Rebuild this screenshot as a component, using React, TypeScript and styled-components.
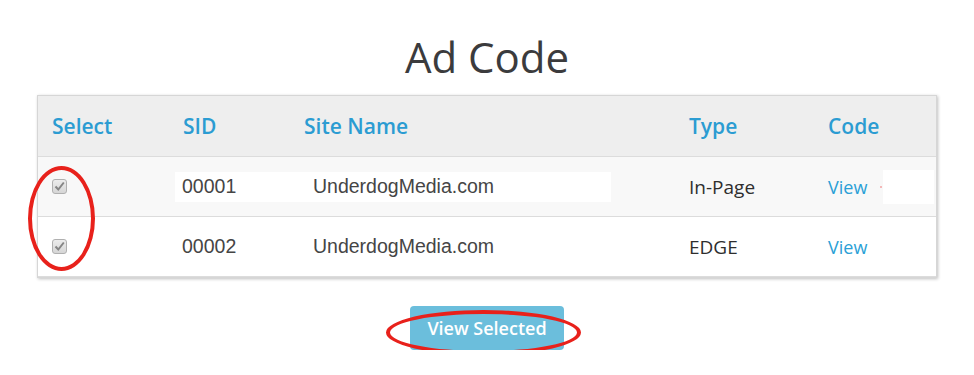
import styled, { createGlobalStyle } from "styled-components";

const GlobalStyle = createGlobalStyle`
  body {
    margin: 0;
    background: #fff;
    font-family: "Open Sans", "Liberation Sans", sans-serif;
  }
`;

const Page = styled.div`
  width: 974px;
  padding-top: 32px;
  display: flex;
  flex-direction: column;
  align-items: center;
`;

const Title = styled.h1`
  margin: 0 0 13px;
  height: 50px;
  line-height: 50px;
  font-size: 42px;
  font-weight: 400;
  color: #3b3b3d;
`;

const Card = styled.div`
  position: relative;
  width: 898px;
  border: 1px solid #d6d6d6;
  box-shadow: 1px 1px 3px rgba(0, 0, 0, 0.25);
  background: #fff;
`;

const Row = styled.div<{ $bg: string; $height: number }>`
  display: grid;
  grid-template-columns: 131px 121px 385px 139px 1fr;
  align-items: center;
  height: ${p => p.$height}px;
  padding-left: 14px;
  background: ${p => p.$bg};
  border-bottom: 1px solid #dcdcdc;
  &:last-child {
    border-bottom: none;
  }
`;

const Head = styled.div`
  font-size: 21px;
  font-weight: 600;
  color: #2b9cd2;
`;

const Cell = styled.div<{ $marked?: boolean; $shift?: number; $width?: number }>`
  display: flex;
  align-items: center;
  height: 30px;
  padding-left: ${p => p.$shift ?? 0}px;
  ${p => p.$width ? `width: ${p.$width}px; box-sizing: border-box;` : ""}
  background: ${p => (p.$marked ? "#fff" : "transparent")};
`;

const SidCell = styled(Cell)`
  margin-left: -8px;
  padding-left: 7px;
`;

const Plain = styled.span`
  font-family: "Liberation Sans", Arial, sans-serif;
  font-size: 19.5px;
  color: #454545;
`;

const Sans = styled.span`
  font-size: 19px;
  color: #2e2e2e;
`;

const ViewLink = styled.a`
  font-size: 18px;
  color: #2a9fd6;
  text-decoration: none;
`;

const Dot = styled.span`
  width: 2px;
  height: 2px;
  margin-left: 13px;
  border-radius: 50%;
  background: #f3a3a3;
`;

const Blank = styled.span`
  width: 51px;
  height: 34px;
  margin-left: 1px;
  background: #fff;
`;

const Box = styled.span`
  display: flex;
  align-items: center;
  justify-content: center;
  width: 15px;
  height: 15px;
  box-sizing: border-box;
  border: 1px solid #b0b0b0;
  border-radius: 3px;
  background: linear-gradient(#ececec, #d6d6d6);
`;

const Ring = styled.span`
  position: absolute;
  box-sizing: border-box;
  border: 4px solid #e8211b;
  border-radius: 50%;
  pointer-events: none;
`;

const SelectRing = styled(Ring)`
  left: -10px;
  top: 70px;
  width: 67px;
  height: 105px;
`;

const ButtonWrap = styled.div`
  position: relative;
  margin-top: 28px;
`;

const Button = styled.button`
  width: 154px;
  height: 44px;
  border: none;
  border-radius: 4px;
  background: #6bbedc;
  color: #fff;
  font-family: "Open Sans", sans-serif;
  font-size: 18px;
  font-weight: 600;
  cursor: pointer;
`;

const ButtonRing = styled(Ring)`
  left: -24px;
  top: 4px;
  width: 195px;
  height: 45px;
`;

const Check = () => (
  <Box>
    <svg width="11" height="11" viewBox="0 0 11 11">
      <path d="M1.5 5.5 L4.3 8.5 L9.8 1.5" fill="none" stroke="#858585" strokeWidth="2" />
    </svg>
  </Box>
);

const rows = [
  { sid: "00001", site: "UnderdogMedia.com", type: "In-Page", marked: true, bg: "#f8f8f8" },
  { sid: "00002", site: "UnderdogMedia.com", type: "EDGE", marked: false, bg: "#fff" },
];

export default function App() {
  return (
    <>
      <GlobalStyle />
      <Page>
        <Title>Ad Code</Title>
        <Card>
          <Row $bg="#eeeeee" $height={60}>
            <Head>Select</Head>
            <Head>SID</Head>
            <Head>Site Name</Head>
            <Head>Type</Head>
            <Head>Code</Head>
          </Row>
          {rows.map(r => (
            <Row key={r.sid} $bg={r.bg} $height={59}>
              <Cell><Check /></Cell>
              <SidCell $marked={r.marked}><Plain>{r.sid}</Plain></SidCell>
              <Cell $marked={r.marked} $shift={9} $width={307}><Plain>{r.site}</Plain></Cell>
              <Cell><Sans>{r.type}</Sans></Cell>
              <Cell>
                <ViewLink href="#">View</ViewLink>
                {r.marked && (
                  <>
                    <Dot />
                    <Blank />
                  </>
                )}
              </Cell>
            </Row>
          ))}
          <SelectRing />
        </Card>
        <ButtonWrap>
          <Button>View Selected</Button>
          <ButtonRing />
        </ButtonWrap>
      </Page>
    </>
  );
}
